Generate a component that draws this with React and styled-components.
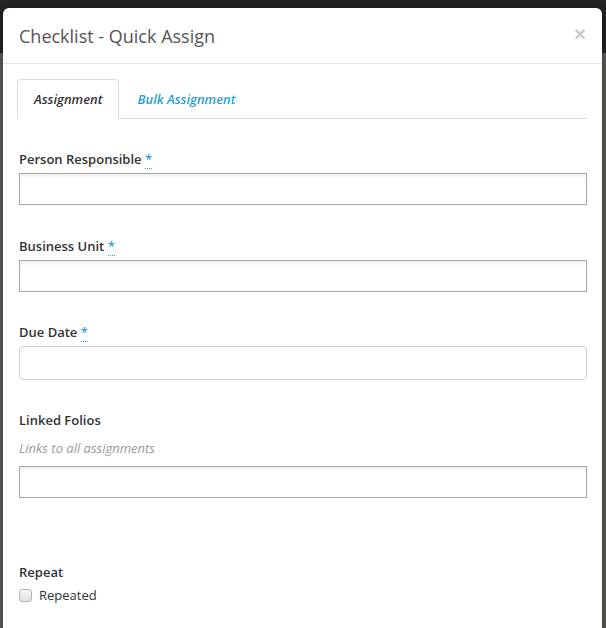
import React, { useState } from 'react';
import styled, { createGlobalStyle } from 'styled-components';

const GlobalStyle = createGlobalStyle`
  html, body {
    margin: 0;
    padding: 0;
    height: 100%;
    overflow: hidden;
  }
  body {
    font-family: "Open Sans", "Liberation Sans", sans-serif;
    font-size: 13px;
    color: #333;
    background: #5b5b57;
  }
`;

const Backdrop = styled.div`
  min-height: 628px;
  background: linear-gradient(to bottom, #232323 0, #232323 53px, #5b5b57 53px);
  padding: 8px 4px 0 3px;
  box-sizing: border-box;
`;

const Modal = styled.div`
  background: #fff;
  border-radius: 6px 6px 0 0;
  min-height: 640px;
  box-shadow: 0 3px 9px rgba(0, 0, 0, 0.4);
`;

const Header = styled.div`
  display: flex;
  align-items: center;
  justify-content: space-between;
  height: 55px;
  padding: 0 16px;
  border-bottom: 1px solid #e5e5e5;
`;

const Title = styled.h4`
  margin: 0;
  font-size: 18px;
  font-weight: 400;
  color: #555;
  line-height: 1;
  padding-top: 1px;
`;

const Close = styled.button`
  border: 0;
  background: none;
  padding: 0;
  margin-top: -4px;
  font-family: "Liberation Sans", sans-serif;
  font-size: 20px;
  font-weight: 700;
  line-height: 1;
  color: #c9c9c9;
  cursor: pointer;
`;

const Body = styled.div`
  padding: 15px 15px 0 16px;
`;

const Tabs = styled.div`
  display: flex;
  border-bottom: 1px solid #ddd;
  margin: 0 0 31px -2px;
`;

const Tab = styled.button`
  font-family: inherit;
  font-size: 13px;
  font-style: italic;
  font-weight: 600;
  height: 40px;
  padding: 0 15px 0 16px;
  margin-right: 2px;
  margin-bottom: -1px;
  background: ${p => (p.$active ? '#fff' : 'transparent')};
  border: 1px solid ${p => (p.$active ? '#ddd' : 'transparent')};
  border-bottom-color: ${p => (p.$active ? '#fff' : 'transparent')};
  border-radius: 4px 4px 0 0;
  color: ${p => (p.$active ? '#333' : '#2a9fd6')};
  cursor: pointer;
`;

const Group = styled.div`
  margin-bottom: ${p => p.$gap ?? 31}px;
`;

const Label = styled.label`
  display: block;
  font-weight: 600;
  font-size: 13px;
  line-height: 18px;
  color: #333;
  margin-bottom: 5px;
`;

const Required = styled.abbr`
  color: #2a9fd6;
  text-decoration: none;
  border-bottom: 1px dotted #2a9fd6;
  cursor: help;
`;

const Help = styled.div`
  font-style: italic;
  color: #999;
  line-height: 18px;
  margin: 10px 0 9px;
`;

const Input = styled.input`
  display: block;
  box-sizing: border-box;
  width: 100%;
  height: ${p => (p.$soft ? 34 : 32)}px;
  padding: 6px 10px;
  font-family: inherit;
  font-size: 13px;
  border: 1px solid ${p => (p.$soft ? '#d0d0d0' : '#aaa6a2')};
  border-radius: ${p => (p.$soft ? 4 : 0)}px;
  box-shadow: inset 0 3px 4px -2px rgba(0, 0, 0, ${p => (p.$soft ? 0.04 : 0.1)});
  background: #fff;
  outline: none;
`;

const CheckRow = styled.label`
  display: flex;
  align-items: center;
  gap: 7px;
  line-height: 18px;
  color: #333;
`;

const Box = styled.input`
  appearance: none;
  margin: 0;
  width: 13px;
  height: 13px;
  border: 1px solid #b5b5b5;
  border-radius: 3px;
  background: linear-gradient(#f4f4f4, #e2e2e2);
`;

export default function App() {
  const [tab, setTab] = useState('single');

  return (
    <>
      <GlobalStyle />
      <Backdrop>
        <Modal>
          <Header>
            <Title>Checklist - Quick Assign</Title>
            <Close aria-label="Close">×</Close>
          </Header>
          <Body>
            <Tabs>
              <Tab $active={tab === 'single'} onClick={() => setTab('single')}>Assignment</Tab>
              <Tab $active={tab === 'bulk'} onClick={() => setTab('bulk')}>Bulk Assignment</Tab>
            </Tabs>

            <Group $gap={32}>
              <Label>Person Responsible <Required title="required">*</Required></Label>
              <Input type="text" />
            </Group>

            <Group $gap={31}>
              <Label>Business Unit <Required title="required">*</Required></Label>
              <Input type="text" />
            </Group>

            <Group $gap={31}>
              <Label>Due Date <Required title="required">*</Required></Label>
              <Input type="text" $soft />
            </Group>

            <Group $gap={65}>
              <Label>Linked Folios</Label>
              <Help>Links to all assignments</Help>
              <Input type="text" />
            </Group>

            <Group>
              <Label>Repeat</Label>
              <CheckRow>
                <Box type="checkbox" />
                Repeated
              </CheckRow>
            </Group>
          </Body>
        </Modal>
      </Backdrop>
    </>
  );
}
